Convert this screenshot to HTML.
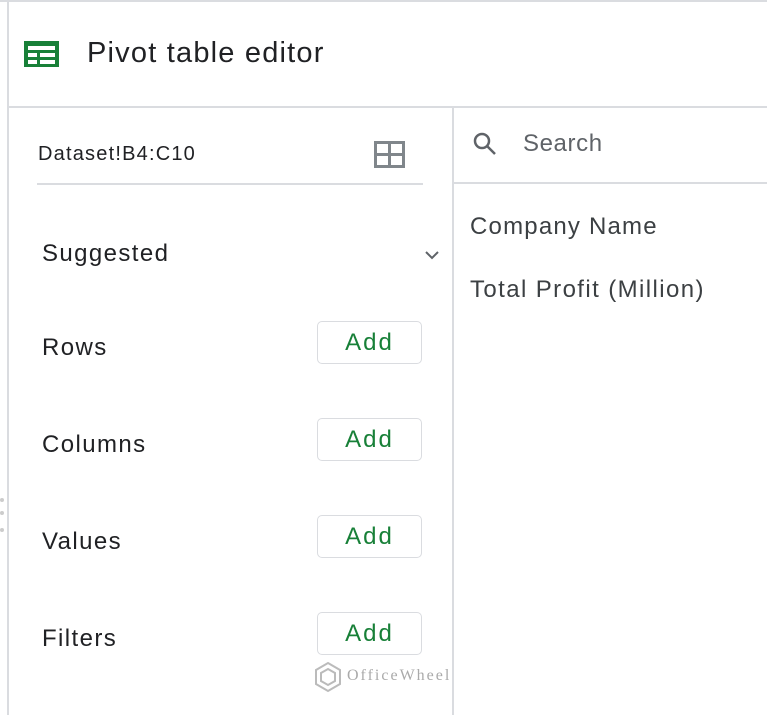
<!DOCTYPE html>
<html><head><style>
body{margin:0;width:767px;height:715px;background:#fff;position:relative;overflow:hidden;font-family:"Liberation Sans",sans-serif;color:#202124}
.a{position:absolute}
.l{position:absolute;font-size:24px;left:42px;letter-spacing:1.4px}
.btn{position:absolute;left:317px;width:103px;height:41px;border:1px solid #dadce0;border-radius:5px;color:#188038;font-size:24px;text-align:center;line-height:41px;letter-spacing:2px}
</style></head><body>
<div class="a" style="left:0;top:0;width:767px;height:2px;background:#dadce0"></div>
<div class="a" style="left:7px;top:0;width:2px;height:715px;background:#dadce0"></div>
<div class="a" style="left:8px;top:106px;width:759px;height:2px;background:#dadce0"></div>
<div class="a" style="left:452px;top:107px;width:2px;height:608px;background:#dadce0"></div>
<div class="a" style="left:453px;top:182px;width:314px;height:2px;background:#dadce0"></div>
<div class="a" style="left:37px;top:183px;width:386px;height:2px;background:#dadce0"></div>
<svg class="a" style="left:24px;top:41px" width="35" height="26" viewBox="0 0 35 26"><rect width="35" height="26" fill="#188038"/><rect x="4" y="5" width="27" height="4" fill="#fff"/><rect x="4" y="12" width="9" height="4" fill="#fff"/><rect x="16" y="12" width="15" height="4" fill="#fff"/><rect x="4" y="19" width="9" height="4" fill="#fff"/><rect x="16" y="19" width="15" height="4" fill="#fff"/></svg>
<div class="a" style="left:87px;top:37px;font-size:29px;letter-spacing:1.2px">Pivot table editor</div>
<div class="a" style="left:38px;top:143px;font-size:20px;letter-spacing:1.2px">Dataset!B4:C10</div>
<svg class="a" style="left:374px;top:141px" width="31" height="27" viewBox="0 0 31 27"><rect x="1.5" y="1.5" width="28" height="24" fill="none" stroke="#80868b" stroke-width="3"/><path d="M15.5 1v25M1 13.5h29" stroke="#80868b" stroke-width="3"/></svg>
<div class="l" style="top:240px">Suggested</div>
<svg class="a" style="left:424px;top:249px" width="16" height="12"><path d="M2 3l6 6 6-6" fill="none" stroke="#5f6368" stroke-width="2"/></svg>
<div class="l" style="top:334px">Rows</div>
<div class="btn" style="top:321px">Add</div>
<div class="l" style="top:431px">Columns</div>
<div class="btn" style="top:418px">Add</div>
<div class="l" style="top:528px">Values</div>
<div class="btn" style="top:515px">Add</div>
<div class="l" style="top:625px">Filters</div>
<div class="btn" style="top:612px">Add</div>
<div class="a" style="left:0;top:498px;width:4px;height:4px;border-radius:2px;background:#ccc"></div>
<div class="a" style="left:0;top:511px;width:4px;height:4px;border-radius:2px;background:#ccc"></div>
<div class="a" style="left:0;top:528px;width:4px;height:4px;border-radius:2px;background:#ccc"></div>
<svg class="a" style="left:313px;top:661px" width="30" height="32"><path d="M15 2l12 7v14l-12 7-12-7V9z" fill="none" stroke="#bbb" stroke-width="2"/><path d="M15 8l7 4v8l-7 4-7-4v-8z" fill="none" stroke="#bbb" stroke-width="2"/></svg>
<div class="a" style="left:347px;top:667px;font-family:'Liberation Serif',serif;font-size:16px;letter-spacing:2px;color:#aaa">OfficeWheel</div>
<svg class="a" style="left:472px;top:131px" width="26" height="26"><circle cx="10" cy="10" r="7" fill="none" stroke="#5f6368" stroke-width="2.5"/><path d="M15 15l8 8" stroke="#5f6368" stroke-width="2.5"/></svg>
<div class="a" style="left:523px;top:130px;font-size:24px;color:#5f6368;letter-spacing:0.6px">Search</div>
<div class="a" style="left:470px;top:213px;font-size:24px;color:#3c4043;letter-spacing:1.2px">Company Name</div>
<div class="a" style="left:470px;top:276px;font-size:24px;color:#3c4043;letter-spacing:1.4px">Total Profit (Million)</div>
</body></html>
